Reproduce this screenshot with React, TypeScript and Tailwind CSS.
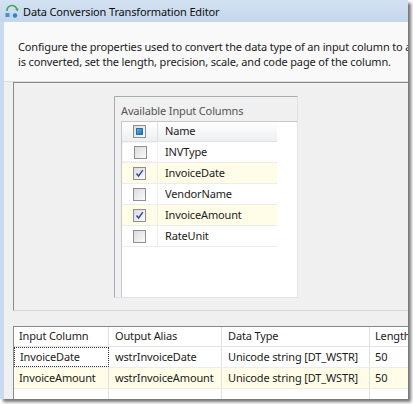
import React from "react";

const FONT = { fontFamily: '"Noto Sans", "Open Sans", sans-serif' };

const columns = [
  { name: "INVType", checked: false, focus: true },
  { name: "InvoiceDate", checked: true },
  { name: "VendorName", checked: false },
  { name: "InvoiceAmount", checked: true },
  { name: "RateUnit", checked: false },
];

const mappings = [
  { input: "InvoiceDate", alias: "wstrInvoiceDate", type: "Unicode string [DT_WSTR]", len: "50" },
  { input: "InvoiceAmount", alias: "wstrInvoiceAmount", type: "Unicode string [DT_WSTR]", len: "50" },
];

function TitleIcon() {
  return (
    <svg width="16" height="16" viewBox="0 0 16 16">
      <path d="M3 8 A5 5 0 0 1 13 7" fill="none" stroke="#3fa35a" strokeWidth="1.6" />
      <path d="M11.2 6.2 L13.6 8.4 L14.6 5.6 Z" fill="#3fa35a" />
      <rect x="1.5" y="10" width="4" height="4" fill="#4a8fd6" />
      <circle cx="11" cy="12.5" r="2.2" fill="#2f7fd4" />
    </svg>
  );
}

function Check({ checked, header }: { checked?: boolean; header?: boolean }) {
  return (
    <div className="w-[13px] h-[13px] border border-[#8e8f8f] bg-gradient-to-br from-[#dcdcdc] to-[#fbfbfb] flex items-center justify-center">
      {header && <div className="w-[7px] h-[7px] bg-gradient-to-br from-[#5fb3e6] to-[#1d6fb0] border border-[#2a6ea8]" />}
      {checked && (
        <svg width="9" height="9" viewBox="0 0 9 9">
          <path d="M1.5 4.5 L3.6 7 L7.8 1.2" fill="none" stroke="#2b4a9f" strokeWidth="1.4" />
        </svg>
      )}
    </div>
  );
}

export default function App() {
  return (
    <div className="w-[413px] h-[404px] bg-white overflow-hidden text-[11px] tracking-[-0.15px] text-[#1b1b1b]" style={FONT}>
      <div className="w-[408px] h-[399px] bg-[#c9dbee] flex flex-col shadow-[3px_3px_3px_rgba(0,0,0,0.55)]">
        {/* title bar */}
        <div className="h-[22px] flex items-center gap-[3px] pl-[4px] bg-gradient-to-b from-[#d3e2f2] to-[#c3d6ec] shrink-0">
          <TitleIcon />
          <span className="text-[#0d0d0d] leading-none">Data Conversion Transformation Editor</span>
        </div>

        <div className="ml-[4px] flex-1 flex flex-col bg-[#f0f0f0] min-h-0">
          {/* description */}
          <div className="h-[60px] bg-[#f9f9f9] pl-[14px] pt-[17px] leading-[15px] whitespace-nowrap overflow-hidden shrink-0 border-b border-[#dcdcdc]">
            <div>Configure the properties used to convert the data type of an input column to a different data type. Depending</div>
            <div>is converted, set the length, precision, scale, and code page of the column.</div>
          </div>

          {/* available columns panel */}
          <div className="ml-[9px] h-[229px] border-l border-t border-[#8a8a8a] border-b border-b-[#d8d8d8] bg-[#f0f0f0] pl-[100px] pt-[13px] shrink-0">
            <div className="w-[184px] h-[202px] border border-[#a5acb5] border-r-[#dfe3e8] border-b-[#dfe3e8] bg-[#f0f0f0] flex flex-col">
              <div className="h-[24px] pl-[6px] pt-[4px] flex items-center text-[#555]">Available Input Columns</div>
              <div className="ml-[6px] flex-1 bg-white border-l border-t border-[#c8c8c8] flex flex-col">
                <div className="h-[20px] flex bg-gradient-to-b from-white to-[#eeeff1] border-b border-[#e2e2e2] w-[155px]">
                  <div className="w-[36px] flex items-center justify-center border-r border-[#e2e2e2]">
                    <Check header />
                  </div>
                  <div className="flex-1 pl-[7px] flex items-center">Name</div>
                </div>
                {columns.map((c) => (
                  <div key={c.name} className={`h-[21px] flex w-[155px] border-b border-[#ececec] ${c.checked ? "bg-[#fffde8]" : "bg-white"}`}>
                    <div className={`w-[36px] flex items-center justify-center border-r border-[#ececec] ${c.focus ? "border border-dotted border-[#333]" : ""}`}>
                      <Check checked={c.checked} />
                    </div>
                    <div className="flex-1 pl-[7px] flex items-center">{c.name}</div>
                  </div>
                ))}
              </div>
            </div>
          </div>

          {/* mappings grid */}
          <div className="ml-[9px] mt-[15px] flex-1 bg-white border-l border-t border-[#8a8a8a] flex flex-col whitespace-nowrap overflow-hidden">
            <div className="h-[20px] flex border-b border-[#e4e4e4]">
              <div className="w-[95px] shrink-0 pl-[5px] flex items-center border-r border-[#e0e0e0]">Input Column</div>
              <div className="w-[113px] shrink-0 pl-[6px] flex items-center border-r border-[#e0e0e0]">Output Alias</div>
              <div className="w-[148px] shrink-0 pl-[6px] flex items-center border-r border-[#e0e0e0]">Data Type</div>
              <div className="pl-[5px] flex items-center">Length</div>
            </div>
            {mappings.map((m, i) => (
              <div key={m.input} className={`h-[21px] flex border-b border-[#ececec] ${i === 1 ? "bg-[#fffde8]" : ""}`}>
                <div className={`w-[95px] shrink-0 pl-[5px] flex items-center ${i === 0 ? "border border-dotted border-[#333]" : "border-r border-[#e0e0e0]"}`}>{m.input}</div>
                <div className="w-[113px] shrink-0 pl-[6px] flex items-center border-r border-[#e0e0e0]">{m.alias}</div>
                <div className="w-[148px] shrink-0 pl-[6px] flex items-center border-r border-[#e0e0e0]">{m.type}</div>
                <div className="pl-[5px] flex items-center">{m.len}</div>
              </div>
            ))}
            <div className="flex-1 flex">
              <div className="w-[95px] shrink-0 border-r border-[#e0e0e0]" />
              <div className="w-[113px] shrink-0 border-r border-[#e0e0e0]" />
              <div className="w-[148px] shrink-0 border-r border-[#e0e0e0]" />
            </div>
          </div>
        </div>
      </div>
    </div>
  );
}
